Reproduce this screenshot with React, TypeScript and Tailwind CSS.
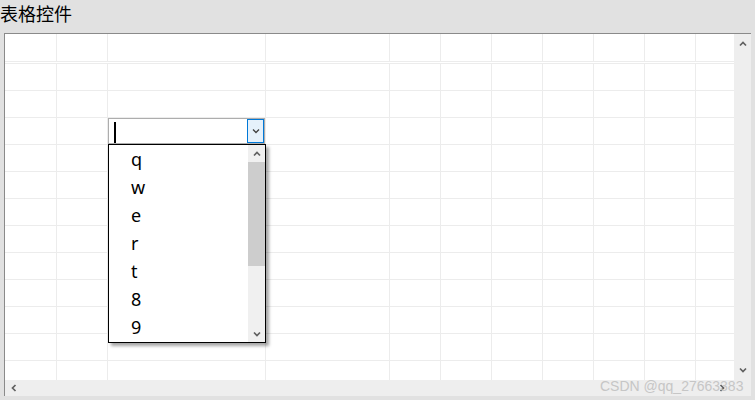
import React from 'react';

type Dir = 'up' | 'down' | 'left' | 'right';

const Chevron = ({ dir }: { dir: Dir }) => {
  const paths: Record<Dir, string> = {
    up: 'M1 5.5 L4 2.5 L7 5.5',
    down: 'M1 2.5 L4 5.5 L7 2.5',
    left: 'M5.5 1 L2.5 4 L5.5 7',
    right: 'M2.5 1 L5.5 4 L2.5 7',
  };
  return (
    <svg width="8" height="8" viewBox="0 0 8 8">
      <path d={paths[dir]} fill="none" stroke="#606060" strokeWidth="1.7" />
    </svg>
  );
};

const colCls = [
  'w-[52px] border-r',
  'w-[51px] border-r',
  'w-[158px] border-r',
  'w-[124px] border-r',
  'w-[51px] border-r',
  'w-[51px] border-r',
  'w-[51px] border-r',
  'w-[51px] border-r',
  'w-[51px] border-r',
  'w-[51px] border-r',
  'w-[38px]',
];

const Row = ({ h }: { h: string }) => (
  <div className={`flex shrink-0 border-b border-[#ececec] ${h}`}>
    {colCls.map((c, i) => (
      <div key={i} className={`${c} h-full shrink-0 border-[#ececec]`} />
    ))}
  </div>
);

export default function App() {
  const rows = Array.from({ length: 12 });
  const items = ['q', 'w', 'e', 'r', 't', '8', '9'];
  return (
    <div className="relative w-[755px] h-[400px] overflow-hidden bg-[#e1e1e1] font-['Noto_Sans',sans-serif]">
      <div className="h-[33px] text-[18px] leading-[26px] text-black font-['Noto_Sans_CJK_SC',sans-serif]">
        表格控件
      </div>
      <div className="ml-[4px] w-[747px] h-[363px] flex flex-col border-t border-l border-[#8a8a8a] bg-white">
        <div className="flex flex-1 min-h-0">
          <div className="w-[729px] overflow-hidden flex flex-col">
            <Row h="h-[28px]" />
            <div className="h-[1px] shrink-0" />
            <div className="flex flex-col border-t border-[#ececec]">
              {rows.map((_, i) => (
                <Row key={i} h="h-[27px]" />
              ))}
            </div>
          </div>
          <div className="w-[17px] bg-[#eeeeee] flex flex-col justify-between">
            <div className="h-[20px] flex items-center justify-center">
              <Chevron dir="up" />
            </div>
            <div className="h-[20px] flex items-center justify-center">
              <Chevron dir="down" />
            </div>
          </div>
        </div>
        <div className="h-[16px] bg-[#eeeeee] flex items-center justify-between pr-[21px]">
          <div className="w-[18px] h-full flex items-center justify-center">
            <Chevron dir="left" />
          </div>
          <div className="w-[16px] h-full flex items-center justify-center">
            <Chevron dir="right" />
          </div>
        </div>
      </div>

      {/* in-cell combobox editor */}
      <div className="absolute left-[108px] top-[118px] w-[157px] h-[26px] border border-[#adadad] bg-white flex">
        <div className="flex-1 relative">
          <div className="absolute left-[5px] top-[3px] w-[2px] h-[21px] bg-black" />
        </div>
        <div className="w-[17px] h-full border border-[#0078d7] bg-[#e5f1fb] flex items-center justify-center">
          <svg width="8" height="8" viewBox="0 0 8 8">
            <path d="M1 2.5 L4 5.5 L7 2.5" fill="none" stroke="#404040" strokeWidth="1.3" />
          </svg>
        </div>
      </div>

      {/* dropdown list */}
      <div className="absolute left-[108px] top-[144px] w-[158px] h-[199px] border border-black bg-white flex shadow-[3px_3px_3px_rgba(0,0,0,0.35)]">
        <div className="flex-1 flex flex-col">
          {items.map((t) => (
            <div key={t} className="h-[28px] pl-[22px] text-[18px] leading-[28px] text-black">
              {t}
            </div>
          ))}
        </div>
        <div className="w-[17px] bg-[#f0f0f0] flex flex-col">
          <div className="h-[17px] flex items-center justify-center">
            <Chevron dir="up" />
          </div>
          <div className="h-[104px] bg-[#cdcdcd]" />
          <div className="flex-1" />
          <div className="h-[17px] flex items-center justify-center">
            <Chevron dir="down" />
          </div>
        </div>
      </div>

      <div className="absolute left-[600px] top-[377px] text-[14px] leading-[18px] text-[#c6c6c6] font-['Liberation_Sans',sans-serif] whitespace-nowrap">
        CSDN @qq_27663383
      </div>
    </div>
  );
}
